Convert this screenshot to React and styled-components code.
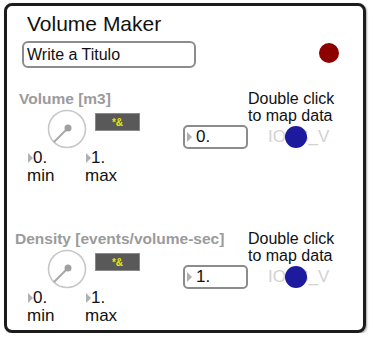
import React from 'react';
import styled, { createGlobalStyle } from 'styled-components';

const GlobalStyle = createGlobalStyle`
  body {
    margin: 0;
    background: #ffffff;
    font-family: "Liberation Sans", Arial, sans-serif;
    color: #111111;
  }
`;

const Panel = styled.div`
  box-sizing: border-box;
  margin: 3px 0 0 4px;
  width: 362px;
  height: 330px;
  border: 3px solid #1c1c1c;
  border-radius: 8px;
  box-shadow: 1px 1px 2px rgba(0, 0, 0, 0.35);
  padding-top: 6px;
  display: flex;
  flex-direction: column;
`;

const Title = styled.div`
  font-size: 21px;
  line-height: 24px;
  margin-left: 20px;
`;

const TitleRow = styled.div`
  display: flex;
  align-items: center;
  justify-content: space-between;
  margin-top: 5px;
  padding: 0 24px 0 15px;
`;

const TextField = styled.div`
  box-sizing: border-box;
  width: 174px;
  height: 27px;
  border: 2px solid #8c8c8c;
  border-radius: 6px;
  padding: 0 3px;
  font-size: 16px;
  line-height: 23px;
`;

const RecordDot = styled.div`
  width: 20px;
  height: 20px;
  border-radius: 50%;
  background: #8c0000;
  margin-bottom: 4px;
`;

const Sections = styled.div`
  margin-top: 22px;
  display: flex;
  flex-direction: column;
  gap: 45px;
`;

const Section = styled.div`
  display: flex;
`;

const LeftCol = styled.div`
  width: 176px;
  flex-shrink: 0;
  display: flex;
  flex-direction: column;
`;

const Label = styled.div`
  font-size: 15.5px;
  font-weight: 700;
  line-height: 18px;
  color: #9b9b9b;
  white-space: nowrap;
  margin-left: ${(p) => p.$inset}px;
`;

const KnobRow = styled.div`
  display: flex;
  align-items: flex-start;
  gap: 8px;
  margin: 1px 0 0 40px;
`;

const Meter = styled.div`
  box-sizing: border-box;
  width: 45px;
  height: 18px;
  margin-top: 4px;
  background: #595959;
  border: 1px solid #8a8a8a;
  display: flex;
  align-items: center;
  justify-content: center;
  color: #e8e800;
  font-size: 10px;
  font-weight: 700;
`;

const RangeRow = styled.div`
  display: flex;
  margin-left: 20px;
`;

const RangeItem = styled.div`
  width: 58px;
  display: flex;
  flex-direction: column;
`;

const Value = styled.div`
  display: flex;
  align-items: center;
  font-size: 17px;
  line-height: 18px;
`;

const Arrow = styled.span`
  width: 0;
  height: 0;
  border-left: 5px solid #b0b0b0;
  border-top: 5px solid transparent;
  border-bottom: 5px solid transparent;
  margin-left: ${(p) => p.$before}px;
  margin-right: ${(p) => p.$after}px;
`;

const RangeLabel = styled.div`
  font-size: 17px;
  line-height: 18px;
`;

const RightCol = styled.div`
  display: flex;
  flex-direction: column;
`;

const Hint = styled.div`
  margin-left: 65px;
  font-size: 16px;
  line-height: 17px;
`;

const NumRow = styled.div`
  display: flex;
  align-items: center;
  margin-top: 1px;
`;

const NumBox = styled.div`
  box-sizing: border-box;
  width: 65px;
  height: 24px;
  border: 2px solid #8c8c8c;
  border-radius: 5px;
  padding-left: 2px;
  display: flex;
  align-items: center;
  font-size: 17px;
`;

const IdTag = styled.div`
  position: relative;
  margin-left: 20px;
  font-size: 17px;
  color: #d2d2d2;
`;

const IdDot = styled.div`
  position: absolute;
  left: 17px;
  top: 50%;
  transform: translateY(-50%);
  width: 22px;
  height: 22px;
  border-radius: 50%;
  background: #1e1a9e;
`;

const Knob = () => (
  <svg width="40" height="40" viewBox="0 0 40 40">
    <circle cx="20" cy="20" r="18.5" fill="#fff" stroke="#c8c8c8" strokeWidth="1.6" />
    <line x1="21" y1="19" x2="7.5" y2="32.5" stroke="#a8a8a8" strokeWidth="2" strokeLinecap="round" />
    <circle cx="21" cy="19" r="3.5" fill="#a0a0a0" />
  </svg>
);

const Range = ({ value, label }) => (
  <RangeItem>
    <Value>
      <Arrow $before={1} $after={0} />
      {value}
    </Value>
    <RangeLabel>{label}</RangeLabel>
  </RangeItem>
);

const Mapper = ({ label, inset, value }) => (
  <Section>
    <LeftCol>
      <Label $inset={inset}>{label}</Label>
      <KnobRow>
        <Knob />
        <Meter>*&amp;</Meter>
      </KnobRow>
      <RangeRow>
        <Range value="0." label="min" />
        <Range value="1." label="max" />
      </RangeRow>
    </LeftCol>
    <RightCol>
      <Hint>
        Double click
        <br />
        to map data
      </Hint>
      <NumRow>
        <NumBox>
          <Arrow $before={0} $after={4} />
          {value}
        </NumBox>
        <IdTag>
          IOBS_V
          <IdDot />
        </IdTag>
      </NumRow>
    </RightCol>
  </Section>
);

const App = () => (
  <>
    <GlobalStyle />
    <Panel>
      <Title>Volume Maker</Title>
      <TitleRow>
        <TextField>Write a Titulo</TextField>
        <RecordDot />
      </TitleRow>
      <Sections>
        <Mapper label="Volume [m3]" inset={12} value="0." />
        <Mapper label="Density [events/volume-sec]" inset={8} value="1." />
      </Sections>
    </Panel>
  </>
);

export default App;
